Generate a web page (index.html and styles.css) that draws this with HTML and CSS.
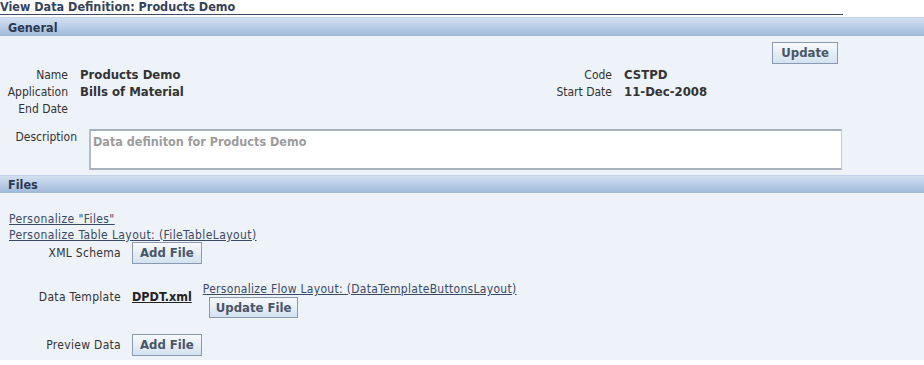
FILE: index.html
```html
<!DOCTYPE html>
<html>
<head>
<meta charset="utf-8">
<link rel="stylesheet" href="styles.css">
</head>
<body>
<div class="page">
  <div class="title">View Data Definition: Products Demo</div>
  <div class="hdr hdr-general">General</div>
  <div class="section general">
    <div class="btn-row"><button class="btn btn-top">Update</button></div>
    <div class="cols">
      <div class="fields left">
        <div class="lbl">Name</div><div class="val">Products Demo</div>
        <div class="lbl">Application</div><div class="val">Bills of Material</div>
        <div class="lbl">End Date</div><div class="val"></div>
      </div>
      <div class="fields right">
        <div class="lbl">Code</div><div class="val">CSTPD</div>
        <div class="lbl">Start Date</div><div class="val">11-Dec-2008</div>
      </div>
    </div>
    <div class="desc-row">
      <div class="desc-lbl">Description</div>
      <div class="desc-box">Data definiton for Products Demo</div>
    </div>
  </div>
  <div class="hdr hdr-files">Files</div>
  <div class="section files">
    <a class="link" href="#">Personalize "Files"</a>
    <a class="link" href="#">Personalize Table Layout: (FileTableLayout)</a>
    <div class="frow r1">
      <div class="flbl">XML Schema</div>
      <button class="btn">Add File</button>
    </div>
    <div class="frow r2">
      <div class="flbl">Data Template</div>
      <a class="file" href="#">DPDT.xml</a>
      <div class="flow">
        <a class="link" href="#">Personalize Flow Layout: (DataTemplateButtonsLayout)</a>
        <button class="btn btn-upd">Update File</button>
      </div>
    </div>
    <div class="frow r3">
      <div class="flbl">Preview Data</div>
      <button class="btn">Add File</button>
    </div>
  </div>
</div>
</body>
</html>
```
FILE: styles.css
```css
html, body {
  margin: 0;
  padding: 0;
  background: #ffffff;
}
body {
  font-family: "DejaVu Sans Condensed", "DejaVu Sans", sans-serif;
  font-stretch: condensed;
  font-size: 12px;
  color: #333333;
}
.page {
  width: 924px;
}
.title {
  width: 843px;
  height: 15px;
  line-height: 13px;
  font-size: 12.5px;
  font-weight: bold;
  color: #35425c;
  border-bottom: 1px solid #3c4a63;
  box-sizing: border-box;
  margin-bottom: 2px;
  white-space: nowrap;
}
.hdr {
  height: 19px;
  line-height: 19px;
  padding-left: 8px;
  font-weight: bold;
  font-size: 12.5px;
  color: #2b3850;
  background: linear-gradient(#d3dff0 0%, #bccfe8 45%, #9fb8da 100%);
  border-top: 1px solid #c4d3e9;
  box-sizing: border-box;
}
.section {
  background: #eef2f9;
}
.general {
  height: 139px;
  padding-top: 6px;
  box-sizing: border-box;
}
.btn-row {
  display: flex;
  justify-content: flex-end;
  padding-right: 86px;
}
.btn {
  font-family: "DejaVu Sans Condensed", "DejaVu Sans", sans-serif;
  font-stretch: condensed;
  font-weight: bold;
  font-size: 13px;
  color: #4a5567;
  background: linear-gradient(#f7fafd 0%, #e6eef7 50%, #d3e2f0 100%);
  border: 1px solid #8a99ad;
  border-radius: 0;
  height: 22px;
  padding: 0 7px;
  margin: 0;
  line-height: 20px;
  cursor: pointer;
}
.btn-top {
  padding: 0 8px;
}
.cols {
  display: flex;
  margin-top: 2px;
}
.fields {
  display: grid;
  grid-auto-rows: 17px;
  column-gap: 12px;
  align-items: center;
}
.left {
  grid-template-columns: 68px 420px;
}
.right {
  grid-template-columns: 101px 200px;
  margin-left: 11px;
}
.lbl {
  text-align: right;
  white-space: nowrap;
}
.val {
  font-weight: bold;
  font-size: 13px;
  white-space: nowrap;
}
.desc-row {
  display: flex;
  margin-top: 12px;
}
.desc-lbl {
  width: 77px;
  text-align: right;
  padding-top: 1px;
  margin-right: 12px;
}
.desc-box {
  width: 753px;
  height: 41px;
  box-sizing: border-box;
  background: #ffffff;
  border: 1px solid #c7ccd6;
  border-top: 2px solid #a9b0bd;
  border-bottom: 2px solid #a9b0bd;
  border-left: 2px solid #b5bcc8;
  padding: 3px 2px;
  font-weight: bold;
  font-size: 12.5px;
  color: #9c9c9c;
}
.hdr-files {
  height: 18px;
  line-height: 18px;
}
.files {
  height: 167px;
  padding-top: 18px;
  padding-left: 9px;
  box-sizing: border-box;
  display: flex;
  flex-direction: column;
  align-items: flex-start;
}
.link {
  color: #3a4a66;
  text-decoration: underline;
  line-height: 16px;
  letter-spacing: 0.4px;
  white-space: nowrap;
}
.flow .link {
  letter-spacing: 0.3px;
}
.frow {
  display: flex;
  align-items: center;
}
.flbl {
  width: 112px;
  text-align: right;
  margin-right: 11px;
  white-space: nowrap;
  letter-spacing: 0.3px;
}
.r1 {
  margin-top: -1px;
}
.r2 {
  margin-top: 17px;
  align-items: flex-start;
}
.r2 .flbl {
  padding-top: 9px;
}
.file {
  font-weight: bold;
  font-size: 12.5px;
  color: #222222;
  text-decoration: underline;
  padding-top: 8px;
  margin-right: 11px;
}
.flow {
  display: flex;
  flex-direction: column;
  align-items: flex-start;
}
.btn-upd {
  margin-left: 6px;
  height: 21px;
  padding: 0 6px;
}
.r3 {
  margin-top: 16px;
}
```
